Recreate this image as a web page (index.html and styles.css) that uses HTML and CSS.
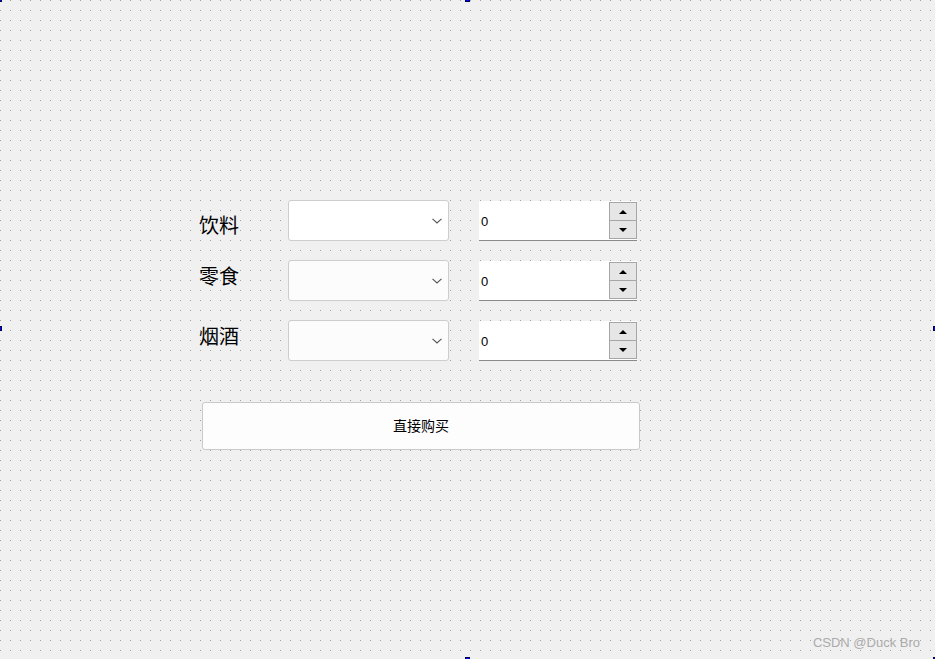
FILE: index.html
```html
<!DOCTYPE html>
<html lang="zh">
<head>
<meta charset="utf-8">
<title>Form</title>
<link rel="stylesheet" href="styles.css">
</head>
<body>
<div class="canvas">
  <div class="form">
    <div class="grid">
      <div class="label label-first">饮料</div>
      <div class="combo"><svg class="chev" width="10" height="6" viewBox="0 0 10 6"><path d="M0.5 0.8 L5 5 L9.5 0.8" fill="none" stroke="#555" stroke-width="1.1"/></svg></div>
      <div class="spin">
        <div class="spin-val">0</div>
        <div class="spin-btns">
          <div class="sb up"><span class="tri-up"></span></div>
          <div class="sb down"><span class="tri-down"></span></div>
        </div>
      </div>

      <div class="label">零食</div>
      <div class="combo combo-off"><svg class="chev" width="10" height="6" viewBox="0 0 10 6"><path d="M0.5 0.8 L5 5 L9.5 0.8" fill="none" stroke="#555" stroke-width="1.1"/></svg></div>
      <div class="spin">
        <div class="spin-val">0</div>
        <div class="spin-btns">
          <div class="sb up"><span class="tri-up"></span></div>
          <div class="sb down"><span class="tri-down"></span></div>
        </div>
      </div>

      <div class="label">烟酒</div>
      <div class="combo combo-off"><svg class="chev" width="10" height="6" viewBox="0 0 10 6"><path d="M0.5 0.8 L5 5 L9.5 0.8" fill="none" stroke="#555" stroke-width="1.1"/></svg></div>
      <div class="spin">
        <div class="spin-val">0</div>
        <div class="spin-btns">
          <div class="sb up"><span class="tri-up"></span></div>
          <div class="sb down"><span class="tri-down"></span></div>
        </div>
      </div>
    </div>
    <div class="buy">直接购买</div>
  </div>

  <div class="watermark">CSDN @Duck Bro</div>
  <span class="handle h-tl"></span>
  <span class="handle h-tc"></span>
  <span class="handle h-ml"></span>
  <span class="handle h-mr"></span>
  <span class="handle h-bc"></span>
  <span class="handle h-br"></span>
</div>
</body>
</html>
```

FILE: styles.css
```css
html, body {
  margin: 0;
  padding: 0;
}
body {
  width: 935px;
  height: 659px;
  overflow: hidden;
  font-family: "Liberation Sans", "Noto Sans CJK SC", sans-serif;
}
.canvas {
  position: relative;
  width: 935px;
  height: 659px;
  overflow: hidden;
  background-color: #f0f0f0;
  background-image: url("data:image/svg+xml,%3Csvg xmlns='http://www.w3.org/2000/svg' width='10' height='10'%3E%3Crect x='0' y='0' width='1' height='1' fill='%23a0a0a0'/%3E%3C/svg%3E");
  background-size: 10px 10px;
  background-position: 0 0;
  padding: 200px 0 0 199px;
  box-sizing: border-box;
}
.form {
  display: flex;
  flex-direction: column;
  align-items: flex-start;
}
.grid {
  display: grid;
  grid-template-columns: 89px 161px 158px;
  column-gap: 0;
  row-gap: 19px;
  grid-auto-rows: 41px;
}
.grid > .spin {
  margin-left: 30px;
}
.label {
  font-family: "Noto Sans CJK SC", sans-serif;
  font-size: 20px;
  line-height: 20px;
  color: #000;
  padding-top: 6px;
}
.label-first {
  padding-top: 15px;
}
.combo {
  box-sizing: border-box;
  height: 41px;
  background: #ffffff;
  border: 1px solid #cdcdcd;
  border-radius: 3px;
  display: flex;
  align-items: center;
  justify-content: flex-end;
  padding-right: 6px;
}
.combo-off {
  background: #fcfcfc;
}
.chev {
  display: block;
}
.spin {
  box-sizing: border-box;
  width: 158px;
  height: 40px;
  margin-top: 1px;
  background: #ffffff;
  border-bottom: 1px solid #8a8a8a;
  display: flex;
}
.spin-val {
  flex: 1;
  display: flex;
  align-items: center;
  padding-left: 2px;
  padding-top: 1px;
  font-size: 13px;
  color: #000;
}
.spin-btns {
  box-sizing: border-box;
  width: 28px;
  height: 37px;
  margin-top: 1px;
  border: 1px solid #a6a6a6;
  background: #e6e6e6;
  display: flex;
  flex-direction: column;
}
.sb {
  flex: 1;
  display: flex;
  align-items: center;
  justify-content: center;
}
.sb.down {
  border-top: 1px solid #a6a6a6;
}
.tri-up {
  width: 0;
  height: 0;
  border-left: 4px solid transparent;
  border-right: 4px solid transparent;
  border-bottom: 4px solid #000;
}
.tri-down {
  width: 0;
  height: 0;
  border-left: 4px solid transparent;
  border-right: 4px solid transparent;
  border-top: 4px solid #000;
}
.buy {
  box-sizing: border-box;
  margin: 41px 0 0 3px;
  width: 438px;
  height: 48px;
  padding-bottom: 3px;
  background: #fdfdfd;
  border: 1px solid #c9c9c9;
  border-radius: 3px;
  display: flex;
  align-items: center;
  justify-content: center;
  font-family: "Noto Sans CJK SC", sans-serif;
  font-size: 14px;
  line-height: 14px;
  color: #000;
}
.watermark {
  position: absolute;
  right: 15px;
  top: 635px;
  font-size: 13px;
  color: #ababab;
  line-height: 16px;
}
.handle {
  position: absolute;
  box-sizing: border-box;
  width: 5px;
  height: 5px;
  background: #0000ff;
  border: 1px solid #000050;
}
.h-tl { left: -3px; top: -3px; }
.h-tc { left: 465px; top: -3px; }
.h-ml { left: -3px; top: 326px; }
.h-mr { left: 933px; top: 326px; }
.h-bc { left: 465px; top: 657px; }
.h-br { left: 933px; top: 657px; }
```
